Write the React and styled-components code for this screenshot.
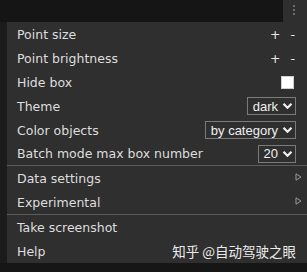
import styled, { createGlobalStyle } from "styled-components";

const GlobalStyle = createGlobalStyle`
  html, body {
    margin: 0;
    padding: 0;
    background: #161616;
  }
`;

const options = [
  { label: "Point size", control: "stepper" },
  { label: "Point brightness", control: "stepper" },
  { label: "Hide box", control: "checkbox" },
  { label: "Theme", control: "select", value: "dark" },
  { label: "Color objects", control: "select", value: "by category" },
  { label: "Batch mode max box number", control: "select", value: "20" },
];

function Chevron() {
  return (
    <svg width="11" height="8" viewBox="0 0 11 8">
      <path d="M1.5 1.8 L5.5 5.8 L9.5 1.8" fill="none" stroke="#f2f2f2" strokeWidth="2.2" />
    </svg>
  );
}

function SubArrow() {
  return (
    <svg width="7" height="8" viewBox="0 0 7 8">
      <path d="M1 0.8 L6 4 L1 7.2 Z" fill="none" stroke="#9a9a9a" strokeWidth="1" />
    </svg>
  );
}

function Control({ item }) {
  if (item.control === "stepper") {
    return (
      <Stepper>
        <span>+</span>
        <span>-</span>
      </Stepper>
    );
  }
  if (item.control === "checkbox") return <Checkbox />;
  return (
    <SelectBox>
      {item.value}
      <Chevron />
    </SelectBox>
  );
}

export default function App() {
  return (
    <>
      <GlobalStyle />
      <Page>
        <TopBar>
          <KebabButton>
            <Dot />
            <Dot />
            <Dot />
          </KebabButton>
        </TopBar>
        <Middle>
          <Gutter />
          <Menu>
            {options.map((item) => (
              <Row key={item.label}>
                <Label>{item.label}</Label>
                <Control item={item} />
              </Row>
            ))}
            <Separator />
            <Row>
              <Label>Data settings</Label>
              <ArrowSlot>
                <SubArrow />
              </ArrowSlot>
            </Row>
            <Row>
              <Label>Experimental</Label>
              <ArrowSlot>
                <SubArrow />
              </ArrowSlot>
            </Row>
            <Separator />
            <Row>
              <Label>Take screenshot</Label>
            </Row>
            <Row>
              <Label>Help</Label>
              <Watermark>知乎 @自动驾驶之眼</Watermark>
            </Row>
          </Menu>
        </Middle>
        <BottomBar />
      </Page>
    </>
  );
}

const Page = styled.div`
  width: 307px;
  height: 272px;
  display: flex;
  flex-direction: column;
  background: #161616;
  overflow: hidden;
`;

const TopBar = styled.div`
  height: 22px;
  display: flex;
  justify-content: flex-end;
  background: #151515;
`;

const KebabButton = styled.div`
  width: 24px;
  background: #2f2f2f;
  display: flex;
  flex-direction: column;
  align-items: center;
  padding-top: 5px;
  padding-right: 2px;
  gap: 2px;
  box-sizing: border-box;
`;

const Dot = styled.span`
  width: 2px;
  height: 2px;
  background: #6e6e6e;
`;

const Middle = styled.div`
  display: flex;
  height: 241px;
`;

const Gutter = styled.div`
  width: 7px;
  background: #1b1b1b;
`;

const Menu = styled.div`
  flex: 1;
  background: #2f2f2f;
  display: flex;
  flex-direction: column;
`;

const Row = styled.div`
  height: 24px;
  display: flex;
  align-items: center;
  justify-content: space-between;
  padding: 1px 11px 0 10px;
  box-sizing: border-box;
  font-family: "DejaVu Sans", sans-serif;
  font-size: 12.5px;
  color: #dedede;
`;

const Label = styled.span`
  white-space: nowrap;
`;

const Stepper = styled.span`
  display: flex;
  gap: 10px;
  color: #e8e8e8;
  font-size: 12.5px;
  margin-right: 1px;
`;

const Checkbox = styled.span`
  width: 11px;
  height: 11px;
  background: #ffffff;
  border: 1px solid #cfcfcf;
  margin-right: 2px;
`;

const SelectBox = styled.span`
  height: 18px;
  box-sizing: border-box;
  border: 1px solid #7a7a7a;
  display: flex;
  align-items: center;
  gap: 4px;
  padding: 0 2px 0 5px;
  font-family: "Liberation Sans", Arial, sans-serif;
  font-size: 13px;
  color: #f0f0f0;
`;

const ArrowSlot = styled.span`
  display: flex;
  margin-right: -6px;
  margin-top: -3px;
`;

const Separator = styled.div`
  height: 1px;
  background: #5c5c5c;
`;

const Watermark = styled.span`
  font-family: "Noto Sans CJK SC", sans-serif;
  font-size: 13.5px;
  color: #ececec;
  margin-top: -2px;
`;

const BottomBar = styled.div`
  flex: 1;
  background: #161616;
`;
